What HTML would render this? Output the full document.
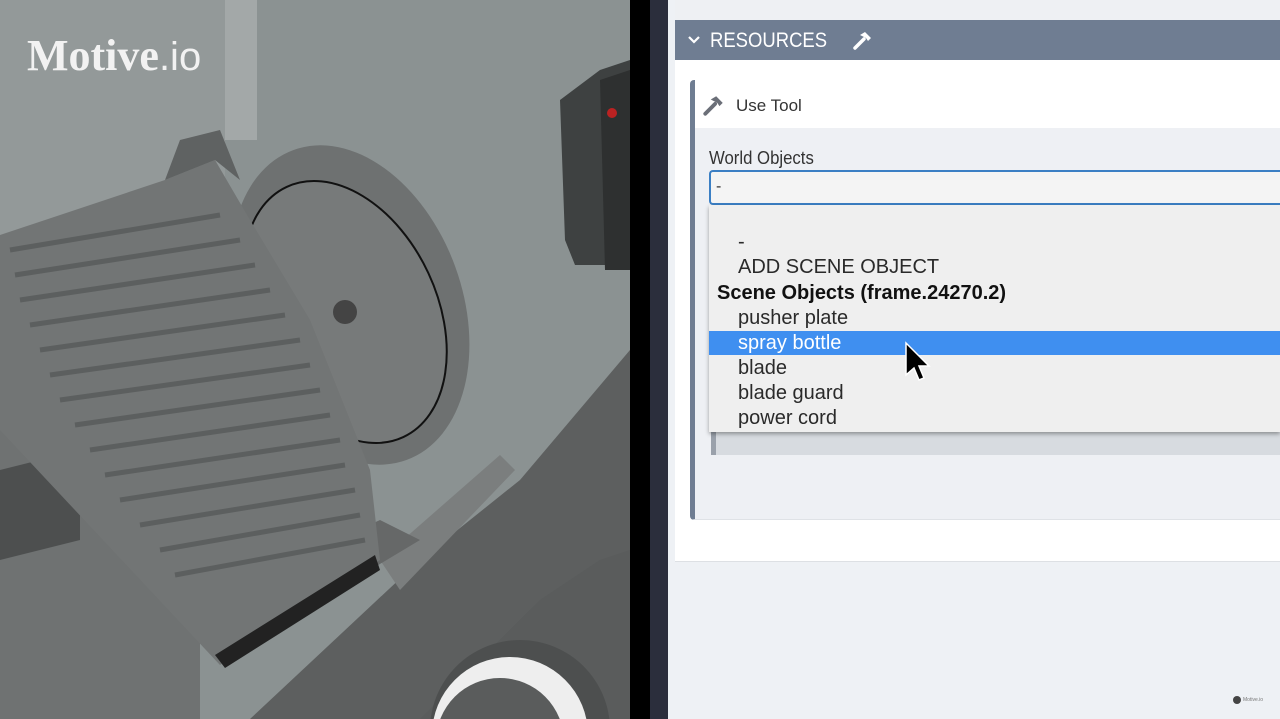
<!DOCTYPE html>
<html><head><meta charset="utf-8"><style>
*{margin:0;padding:0;box-sizing:border-box}
html,body{width:1280px;height:719px;overflow:hidden}
body{position:relative;background:#eef1f5;font-family:"Liberation Sans",sans-serif}
.abs{position:absolute}
.opt{position:absolute;left:738px;font-size:20px;color:#2a2a2a;font-family:"Liberation Sans",sans-serif;white-space:nowrap}
</style></head><body>
<svg class="abs" style="left:0;top:0" width="630" height="719" viewBox="0 0 630 719">
<rect width="630" height="719" fill="#8b9292"/>
<rect x="0" y="0" width="225" height="470" fill="#939999"/>
<rect x="225" y="0" width="32" height="140" fill="#a3a8a8"/>
<polygon points="0,420 200,420 200,719 0,719" fill="#6f7272"/>
<polygon points="0,470 80,450 80,540 0,560" fill="#4d4f4f"/>
<polygon points="560,100 600,70 630,60 630,270 615,265 575,265 565,240" fill="#3e4141"/>
<polygon points="600,80 630,70 630,270 605,270" fill="#2e3030"/>
<circle cx="612" cy="113" r="5" fill="#b22"/>
<polygon points="250,719 420,560 520,480 630,350 630,719" fill="#5d5f5f"/>
<polygon points="420,719 540,600 600,560 630,550 630,719" fill="#5a5c5c"/>
<polygon points="380,560 500,455 515,470 400,590" fill="#7b7e7e"/>
<polygon points="230,590 380,520 420,540 270,630" fill="#666868"/>
<ellipse cx="350" cy="305" rx="112" ry="165" transform="rotate(-20 350 305)" fill="#6e7171"/>
<ellipse cx="345" cy="312" rx="92" ry="138" transform="rotate(-25 345 312)" fill="#777a7a" stroke="#111" stroke-width="2"/>
<circle cx="345" cy="312" r="12" fill="#444"/>
<polygon points="0,235 165,180 215,160 250,220 310,320 370,470 380,560 220,665 0,430" fill="#727575"/>
<polygon points="165,180 180,140 220,130 240,180 215,160" fill="#5f6262"/>
<g stroke="#5c5f5f" stroke-width="5">
<line x1="10" y1="250" x2="220" y2="215"/><line x1="15" y1="275" x2="240" y2="240"/>
<line x1="20" y1="300" x2="255" y2="265"/><line x1="30" y1="325" x2="270" y2="290"/>
<line x1="40" y1="350" x2="285" y2="315"/><line x1="50" y1="375" x2="300" y2="340"/>
<line x1="60" y1="400" x2="310" y2="365"/><line x1="75" y1="425" x2="320" y2="390"/>
<line x1="90" y1="450" x2="330" y2="415"/><line x1="105" y1="475" x2="340" y2="440"/>
<line x1="120" y1="500" x2="345" y2="465"/><line x1="140" y1="525" x2="355" y2="490"/>
<line x1="160" y1="550" x2="360" y2="515"/><line x1="175" y1="575" x2="365" y2="540"/>
</g>
<polygon points="215,655 375,555 380,570 225,668" fill="#222"/>
<circle cx="520" cy="730" r="90" fill="#4d4f4f"/>
<circle cx="510" cy="735" r="78" fill="#eee"/>
<circle cx="500" cy="742" r="64" fill="#5a5c5c"/>
<text x="27" y="70" fill="#f2f2f2" font-family="Liberation Serif,serif" font-weight="bold" font-size="44">Motive<tspan font-weight="normal" font-family="Liberation Sans,sans-serif" font-size="40">.io</tspan></text>
</svg>
<div class="abs" style="left:630px;top:0;width:20px;height:719px;background:#000"></div>
<div class="abs" style="left:650px;top:0;width:18px;height:719px;background:#2b2e3c"></div>
<div class="abs" style="left:675px;top:0;width:605px;height:20px;background:#eef0f3"></div>
<div class="abs" style="left:675px;top:20px;width:605px;height:40px;background:#6f7d92"></div>
<svg class="abs" style="left:686px;top:32px" width="16" height="16" viewBox="0 0 16 16"><path d="M3 5 L8 10 L13 5" stroke="#fff" stroke-width="2.2" fill="none"/></svg>
<div class="abs" style="left:710px;top:29px;font-size:21px;color:#fff;transform:scaleX(0.88);transform-origin:left">RESOURCES</div>
<svg class="abs" style="left:852px;top:29px" width="22" height="22" viewBox="0 0 22 22"><path d="M3 19 L12 10" stroke="#fff" stroke-width="3.5" stroke-linecap="round"/><path d="M8 6 L13 3 L19 9 L16 12 L14 9 Z" fill="#fff"/></svg>
<div class="abs" style="left:675px;top:60px;width:605px;height:502px;background:#fff;border-bottom:1px solid #dde0e4"></div>
<div class="abs" style="left:690px;top:80px;width:590px;height:440px;background:#eef0f4;border-left:5px solid #6f7d92;border-radius:4px 0 0 4px;border-bottom:1px solid #dfe2e6"></div>
<div class="abs" style="left:695px;top:80px;width:585px;height:48px;background:#fff"></div>
<svg class="abs" style="left:702px;top:93px" width="24" height="24" viewBox="0 0 22 22"><path d="M3 19 L12 10" stroke="#6b6f78" stroke-width="3.5" stroke-linecap="round"/><path d="M8 6 L13 3 L19 9 L16 12 L14 9 Z" fill="#6b6f78"/></svg>
<div class="abs" style="left:736px;top:96px;font-size:17px;color:#333">Use Tool</div>
<div class="abs" style="left:709px;top:148px;font-size:18px;color:#333;transform:scaleX(0.93);transform-origin:left">World Objects</div>
<div class="abs" style="left:709px;top:170px;width:571px;height:35px;background:#f4f4f4;border:2px solid #3b7fc4;border-right:none;border-radius:4px 0 0 4px"></div>
<div class="abs" style="left:716px;top:178px;font-size:16px;color:#333">-</div>
<div class="abs" style="left:711px;top:432px;width:569px;height:23px;background:#d7dbe0;border-left:5px solid #9aa1ab"></div>
<div class="abs" style="left:709px;top:205px;width:571px;height:227px;background:#efefef;box-shadow:0 2px 4px rgba(0,0,0,.35)"></div>
<div class="abs" style="left:709px;top:331px;width:571px;height:24px;background:#3f8ff0"></div>
<div class="opt" style="top:231px">-</div>
<div class="opt" style="top:256px">ADD SCENE OBJECT</div>
<div class="opt" style="top:282px;left:717px;font-weight:bold;color:#111">Scene Objects (frame.24270.2)</div>
<div class="opt" style="top:307px">pusher plate</div>
<div class="opt" style="top:332px;color:#fff">spray bottle</div>
<div class="opt" style="top:357px">blade</div>
<div class="opt" style="top:382px">blade guard</div>
<div class="opt" style="top:407px">power cord</div>
<svg class="abs" style="left:904px;top:341px" width="28" height="44" viewBox="0 0 28 44"><path d="M2 2 L2 34 L10 27 L15 39 L20 37 L15 25 L25 25 Z" fill="#000" stroke="#fff" stroke-width="1.5"/></svg>
<div class="abs" style="left:1233px;top:696px;width:8px;height:8px;border-radius:50%;background:#444"></div>
<div class="abs" style="left:1243px;top:697px;font-size:5px;color:#777">Motive.io</div>
</body></html>
